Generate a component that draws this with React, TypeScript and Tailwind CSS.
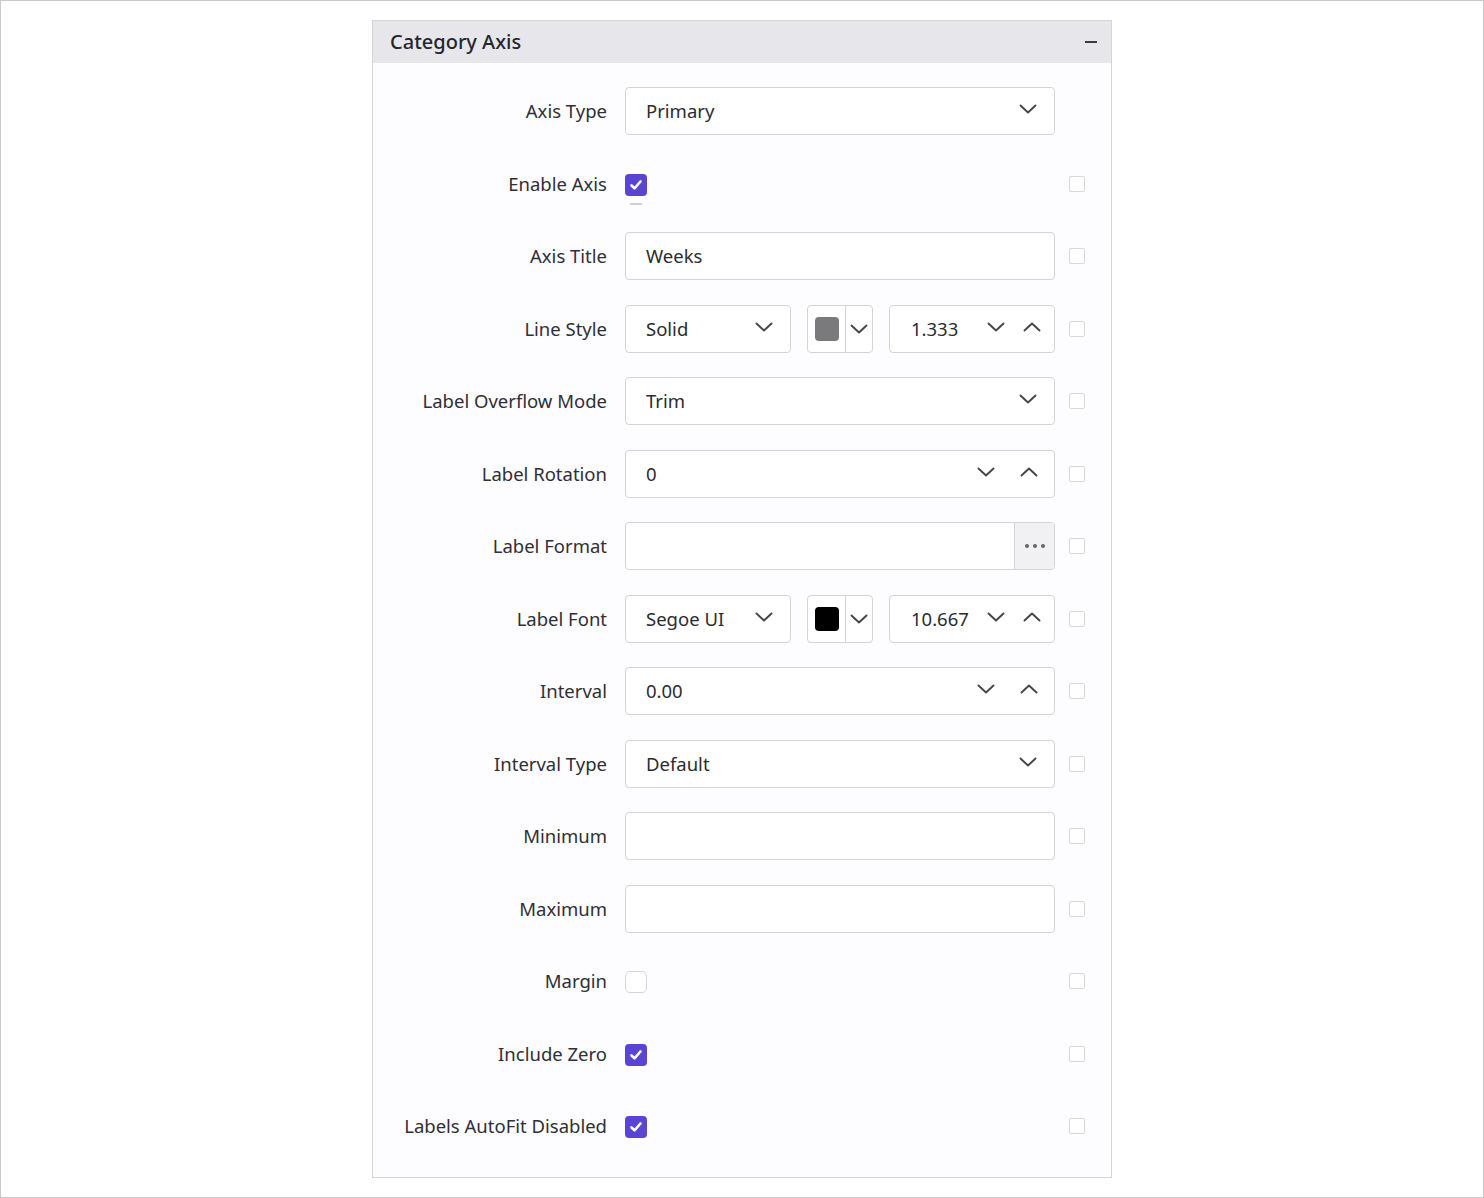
import { ReactNode } from 'react'

const font = { fontFamily: '"Noto Sans", "Open Sans", sans-serif' }

function ChevronDown({ className = '' }: { className?: string }) {
  return (
    <svg viewBox="0 0 18 10" className={`w-[18px] h-[10px] ${className}`} fill="none" stroke="#45454a" strokeWidth="1.9" strokeLinecap="round" strokeLinejoin="round">
      <path d="M1.5 1.5 L9 8.5 L16.5 1.5" />
    </svg>
  )
}

function ChevronUp({ className = '' }: { className?: string }) {
  return (
    <svg viewBox="0 0 18 10" className={`w-[18px] h-[10px] ${className}`} fill="none" stroke="#45454a" strokeWidth="1.9" strokeLinecap="round" strokeLinejoin="round">
      <path d="M1.5 8.5 L9 1.5 L16.5 8.5" />
    </svg>
  )
}

function Check({ checked, focus }: { checked: boolean; focus?: boolean }) {
  return (
    <div className="relative h-[22px] w-[22px]">
      {checked ? (
        <div className="h-[22px] w-[22px] rounded-[4px] bg-[#5a45d3] flex items-center justify-center">
          <svg viewBox="0 0 14 14" className="w-[14px] h-[14px]" fill="none" stroke="#fff" strokeWidth="2.6" strokeLinecap="round" strokeLinejoin="round">
            <path d="M2.5 7.5 L5.5 10.3 L11.5 3.5" />
          </svg>
        </div>
      ) : (
        <div className="h-[22px] w-[22px] rounded-[5px] border border-[#d6d6da] bg-white" />
      )}
      {focus && <div className="absolute left-[5px] top-[29px] h-[2px] w-[12px] bg-[#d0d0d4]" />}
    </div>
  )
}

function SideBox() {
  return <div className="h-4 w-4 border border-[#d8d8dc] rounded-[2px] bg-white" />
}

function Box({ children, className = '' }: { children?: ReactNode; className?: string }) {
  return (
    <div className={`h-12 rounded-[4px] border border-[#d3d3d8] bg-white flex items-center ${className}`}>
      {children}
    </div>
  )
}

function Dropdown({ value, className = '' }: { value: string; className?: string }) {
  return (
    <Box className={`pl-5 pr-[17px] ${className}`}>
      <span className="flex-1 text-[18.5px] text-[#2b2b30]">{value}</span>
      <ChevronDown className="-mt-1" />
    </Box>
  )
}

function Spin({ value, className = '', small }: { value: string; className?: string; small?: boolean }) {
  return (
    <Box className={`${small ? 'pl-[21px] pr-[13px]' : 'pl-5 pr-[16px]'} ${className}`}>
      <span className="flex-1 text-[18.5px] text-[#2b2b30]">{value}</span>
      <ChevronDown className={small ? '-mt-1 mr-[18px]' : '-mt-1 mr-[25px]'} />
      <ChevronUp className="-mt-1" />
    </Box>
  )
}

function ColorPick({ color }: { color: string }) {
  return (
    <Box className="w-[66px] shrink-0">
      <div className="w-[38px] h-full flex items-center justify-center border-r border-[#d3d3d8]">
        <div className="h-6 w-6 rounded-[4px]" style={{ background: color }} />
      </div>
      <div className="flex-1 flex items-center justify-center">
        <ChevronDown className="w-[14px] h-[8px]" />
      </div>
    </Box>
  )
}

type Row = { label: string; control: ReactNode; side?: boolean; inline?: boolean }

const rows: Row[] = [
  { label: 'Axis Type', control: <Dropdown value="Primary" className="w-full" />, side: false },
  { label: 'Enable Axis', control: <Check checked focus />, inline: true },
  { label: 'Axis Title', control: <Box className="w-full pl-5"><span className="text-[18.5px] text-[#2b2b30]">Weeks</span></Box> },
  {
    label: 'Line Style',
    control: (
      <div className="flex items-center">
        <Dropdown value="Solid" className="w-[166px]" />
        <div className="w-[16px]" />
        <ColorPick color="#7a7a7d" />
        <div className="w-[16px]" />
        <Spin value="1.333" small className="flex-1" />
      </div>
    ),
  },
  { label: 'Label Overflow Mode', control: <Dropdown value="Trim" className="w-full" /> },
  { label: 'Label Rotation', control: <Spin value="0" className="w-full" /> },
  {
    label: 'Label Format',
    control: (
      <Box className="w-full overflow-hidden">
        <div className="flex-1" />
        <div className="w-10 h-full bg-[#f1f1f3] border-l border-[#d3d3d8] flex items-center justify-center gap-[4px]">
          <span className="h-[4px] w-[4px] rounded-full bg-[#66666b]" />
          <span className="h-[4px] w-[4px] rounded-full bg-[#66666b]" />
          <span className="h-[4px] w-[4px] rounded-full bg-[#66666b]" />
        </div>
      </Box>
    ),
  },
  {
    label: 'Label Font',
    control: (
      <div className="flex items-center">
        <Dropdown value="Segoe UI" className="w-[166px]" />
        <div className="w-[16px]" />
        <ColorPick color="#000" />
        <div className="w-[16px]" />
        <Spin value="10.667" small className="flex-1" />
      </div>
    ),
  },
  { label: 'Interval', control: <Spin value="0.00" className="w-full" /> },
  { label: 'Interval Type', control: <Dropdown value="Default" className="w-full" /> },
  { label: 'Minimum', control: <Box className="w-full" /> },
  { label: 'Maximum', control: <Box className="w-full" /> },
  { label: 'Margin', control: <Check checked={false} />, inline: true },
  { label: 'Include Zero', control: <Check checked />, inline: true },
  { label: 'Labels AutoFit Disabled', control: <Check checked />, inline: true },
]

export default function App() {
  return (
    <div className="h-[1198px] w-[1484px] border border-[#c9c9cc] bg-white" style={font}>
      <div className="pt-[19px] pl-[371px]">
        <div className="w-[740px] border border-[#d4d4d8] bg-[#fdfcfe]">
          {/* header */}
          <div className="h-[42px] bg-[#e7e7eb] flex items-center pl-[17px] pr-[14px]">
            <h2 className="flex-1 text-[20px] font-medium text-[#25252d]">Category Axis</h2>
            <div className="h-[2px] w-[12px] bg-[#3a3a40]" />
          </div>

          {/* property grid */}
          <div className="grid grid-cols-[234px_430px_16px] gap-x-[18px] gap-y-[24.5px] pt-[24px] pb-[27px]">
            {rows.map((r) => (
              <div key={r.label} className="contents">
                <div className="h-12 flex items-center justify-end text-[18.5px] text-[#2f2f35]">{r.label}</div>
                <div className="h-12 flex items-center">
                  <div className={r.inline ? 'mt-[2px]' : 'w-full'}>{r.control}</div>
                </div>
                <div className="h-12 flex items-center -ml-[4px]">
                  {r.side !== false && <SideBox />}
                </div>
              </div>
            ))}
          </div>
        </div>
      </div>
    </div>
  )
}
